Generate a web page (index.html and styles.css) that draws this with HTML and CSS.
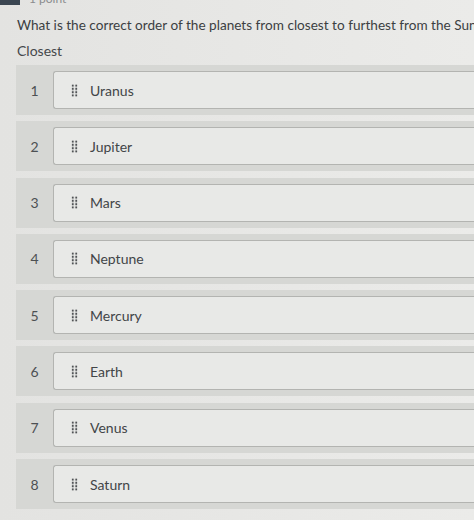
FILE: index.html
```html
<!DOCTYPE html>
<html lang="en">

<head>
    <meta charset="UTF-8">
    <meta name="viewport" content="width=device-width, initial-scale=1.0">
    <title>Ordering Question</title>
    <link rel="stylesheet" href="styles.css">
</head>

<body>
    <div class="quiz-header">
        <div class="q-tab">1</div>
        <span class="q-points">1 point</span>
    </div>

    <div class="question">
        <p class="prompt">What is the correct order of the planets from closest to furthest from the Sun?</p>
        <p class="label-top">Closest</p>

        <ol class="order-list">
            <li class="order-row"><span class="num">1</span><div class="card"><span class="grip"></span>Uranus</div></li>
            <li class="order-row"><span class="num">2</span><div class="card"><span class="grip"></span>Jupiter</div></li>
            <li class="order-row"><span class="num">3</span><div class="card"><span class="grip"></span>Mars</div></li>
            <li class="order-row"><span class="num">4</span><div class="card"><span class="grip"></span>Neptune</div></li>
            <li class="order-row"><span class="num">5</span><div class="card"><span class="grip"></span>Mercury</div></li>
            <li class="order-row"><span class="num">6</span><div class="card"><span class="grip"></span>Earth</div></li>
            <li class="order-row"><span class="num">7</span><div class="card"><span class="grip"></span>Venus</div></li>
            <li class="order-row"><span class="num">8</span><div class="card"><span class="grip"></span>Saturn</div></li>
        </ol>
    </div>
</body>

</html>
```

FILE: styles.css
```css
/* Page */

body {
    margin: 0;
    background: linear-gradient(90deg, #e3e3e1, #ebebe9);
    font-family: 'Lato', 'Liberation Sans', sans-serif;
    color: #3f4245;
    overflow: hidden;
}
/* Top strip with question number (mostly cut off) */

.quiz-header {
    display: flex;
    align-items: flex-end;
    height: 5px;
    overflow: hidden;
}

.q-tab {
    width: 20px;
    height: 5px;
    background-color: #3b4651;
    color: #3b4651;
    font-size: 4px;
}

.q-points {
    margin-left: 9px;
    font-size: 12px;
    line-height: 12px;
    color: #8a8c8e;
}
/* Question text */

.question {
    padding-left: 17px;
}

.prompt {
    margin: 11px 0 0;
    font-size: 13.6px;
    line-height: 18px;
    white-space: nowrap;
    color: #3c3f42;
}

.label-top {
    margin: 8px 0 0;
    font-size: 14px;
    line-height: 18px;
    color: #45484b;
}
/* Ordering rows */

.order-list {
    list-style: none;
    margin: 5px 0 0 -1px;
    padding: 0;
}

.order-row {
    display: flex;
    align-items: center;
    height: 50px;
    margin-bottom: 6.3px;
    background-color: #d6d7d4;
}

.num {
    width: 37px;
    text-align: center;
    font-size: 14px;
    color: #4d5053;
}

.card {
    flex: 1;
    display: flex;
    align-items: center;
    height: 36px;
    padding-left: 17px;
    background-color: #e8e9e7;
    border: 1px solid #b3b4b1;
    border-right: none;
    border-radius: 3px 0 0 3px;
    font-size: 14px;
    color: #424548;
}
/* Drag handle: 2 x 4 dots */

.grip {
    width: 7px;
    height: 13px;
    margin-right: 12px;
    background-image: radial-gradient(circle, #505356 1px, transparent 1.4px);
    background-size: 3.5px 3.25px;
}
```
